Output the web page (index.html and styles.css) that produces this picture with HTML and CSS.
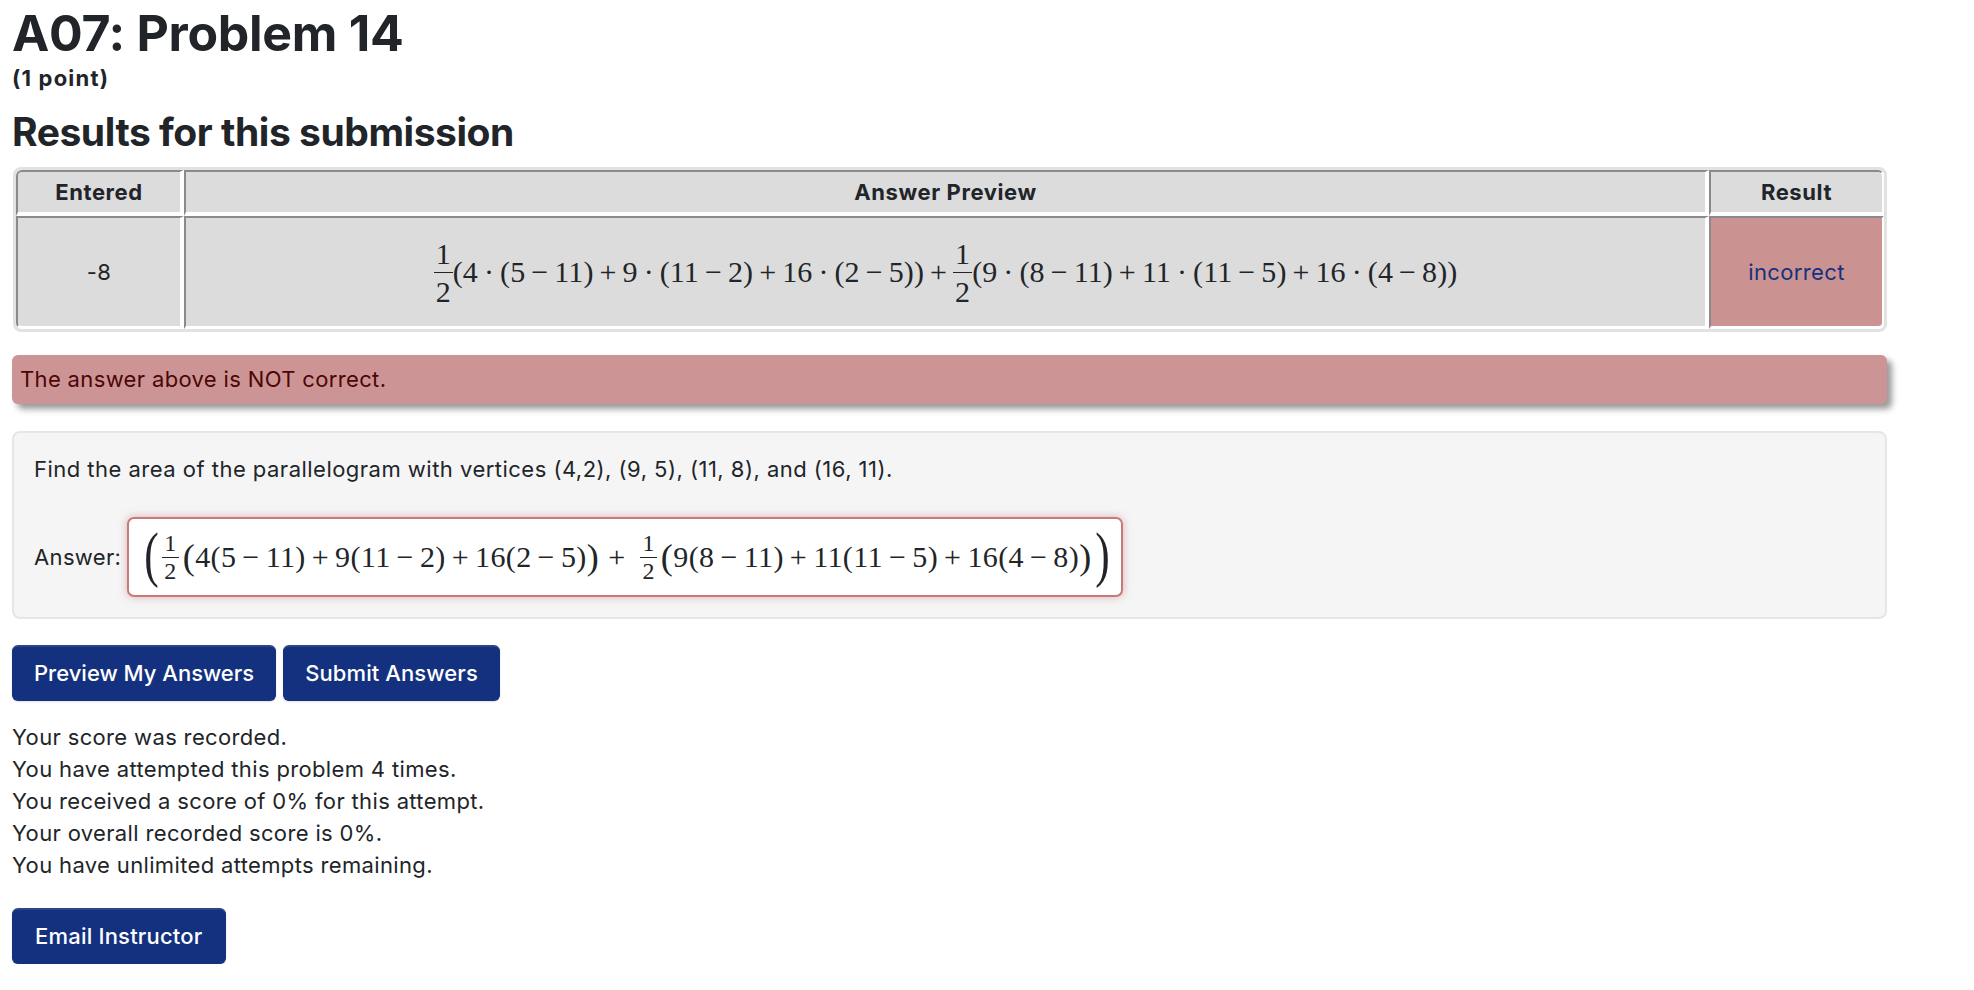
FILE: index.html
```html
<!DOCTYPE html>
<html lang="en">
<head>
<meta charset="utf-8">
<title>A07: Problem 14</title>
<link rel="stylesheet" href="styles.css">
</head>
<body>
<main class="page">
  <h1 class="title">A07: Problem 14</h1>
  <div class="points">(1 point)</div>
  <h2 class="results-title">Results for this submission</h2>
  <div class="results-wrap">
    <table class="results">
      <colgroup><col class="c-entered"><col class="c-preview"><col class="c-result"></colgroup>
      <thead>
        <tr><th class="tl">Entered</th><th>Answer Preview</th><th class="tr">Result</th></tr>
      </thead>
      <tbody>
        <tr>
          <td class="bl">-8</td>
          <td>
            <span class="math display">
              <span class="frac"><span class="num">1</span><span class="den">2</span></span><span>(4<i class="bin">·</i>(5<i class="bin">−</i>11)<i class="bin">+</i>9<i class="bin">·</i>(11<i class="bin">−</i>2)<i class="bin">+</i>16<i class="bin">·</i>(2<i class="bin">−</i>5))<i class="bin">+</i></span><span class="frac"><span class="num">1</span><span class="den">2</span></span><span>(9<i class="bin">·</i>(8<i class="bin">−</i>11)<i class="bin">+</i>11<i class="bin">·</i>(11<i class="bin">−</i>5)<i class="bin">+</i>16<i class="bin">·</i>(4<i class="bin">−</i>8))</span>
            </span>
          </td>
          <td class="incorrect br">incorrect</td>
        </tr>
      </tbody>
    </table>
  </div>

  <div class="alert">The answer above is NOT correct.</div>

  <section class="problem">
    <p class="question">Find the area of the parallelogram with vertices (4,2), (9, 5), (11, 8), and (16, 11).</p>
    <div class="answer-row">
      <span class="answer-label">Answer:</span>
      <div class="answer-box">
        <span class="math inline">
          <span class="paren-xl">(</span><span class="frac small"><span class="num">1</span><span class="den">2</span></span><span class="paren-md">(</span><span>4(5<i class="bin">−</i>11)<i class="bin">+</i>9(11<i class="bin">−</i>2)<i class="bin">+</i>16(2<i class="bin">−</i>5)</span><span class="paren-md">)</span><i class="bin">+</i><span class="frac small"><span class="num">1</span><span class="den">2</span></span><span class="paren-md">(</span><span>9(8<i class="bin">−</i>11)<i class="bin">+</i>11(11<i class="bin">−</i>5)<i class="bin">+</i>16(4<i class="bin">−</i>8)</span><span class="paren-md">)</span><span class="paren-xl">)</span>
        </span>
      </div>
    </div>
  </section>

  <div class="actions">
    <button class="btn btn-preview" type="button">Preview My Answers</button>
    <button class="btn" type="button">Submit Answers</button>
  </div>

  <div class="score">
    <div>Your score was recorded.</div>
    <div>You have attempted this problem 4 times.</div>
    <div>You received a score of 0% for this attempt.</div>
    <div>Your overall recorded score is 0%.</div>
    <div>You have unlimited attempts remaining.</div>
  </div>

  <button class="btn email" type="button">Email Instructor</button>
</main>
</body>
</html>
```

FILE: styles.css
```css
* { box-sizing: border-box; }
html, body { margin: 0; padding: 0; background: #fff; }
body {
  font-family: Inter, "Liberation Sans", sans-serif;
  font-size: 22px;
  line-height: 32px;
  letter-spacing: 0.35px;
  color: #212529;
}
.page { padding: 0 87px 0 12px; }
.title {
  margin: 0;
  padding-top: 3px;
  font-size: 50px;
  line-height: 60px;
  font-weight: 700;
  letter-spacing: -0.3px;
}
.points {
  height: 32px;
  margin-top: -1px;
  font-weight: 700;
  letter-spacing: 1.2px;
}
.results-title {
  margin: 15px 0 0;
  font-size: 39px;
  line-height: 46px;
  font-weight: 700;
  letter-spacing: -0.45px;
}
.results-wrap {
  margin-top: 12px;
  margin-left: 1px;
  border: 3px solid #e2e2e2;
  border-radius: 8px;
  background: #fff;
}
.results {
  width: 100%;
  table-layout: fixed;
  border-collapse: separate;
  border-spacing: 0;
}
.c-entered { width: 168px; }
.c-result { width: 175px; }
.results th, .results td {
  background: #dcdcdc;
  background-clip: padding-box;
  border-style: solid;
  border-color: #8a8a8a #fff #fff #8a8a8a;
  border-width: 2px 4px 4px 2px;
  padding: 0;
  text-align: center;
  vertical-align: middle;
}
.results th { height: 46px; font-weight: 700; letter-spacing: 0.6px; }
.results td { height: 113px; }
.results th:last-child, .results td:last-child { border-right-width: 2px; }
.results td { border-bottom-width: 3px; }
.tl { border-top-left-radius: 6px; }
.tr { border-top-right-radius: 6px; }
.bl { border-bottom-left-radius: 6px; }
.br { border-bottom-right-radius: 6px; }
.results td.incorrect { background: #cb9292; color: #14317f; }

.math {
  font-family: "Liberation Serif", "DejaVu Serif", serif;
  display: inline-flex;
  align-items: center;
  color: #212529;
  white-space: nowrap;
}
.math .bin { font-style: normal; margin: 0 0.2em; }
.math.display { font-size: 30px; line-height: 34px; letter-spacing: 0.1px; }
.frac {
  display: inline-flex;
  flex-direction: column;
  align-items: center;
}
.frac .num { border-bottom: 1.5px solid #212529; padding: 0 2px; line-height: 37px; }
.frac .den { line-height: 37px; }
.frac.small { font-size: 24px; margin: 0 4px 0 0; }
.frac.small .num { line-height: 27px; }
.frac.small .den { line-height: 27px; }
.math.inline .paren-md + .bin { margin-left: 9px; }
.math.inline .bin + .frac.small { margin-left: 9px; }

.alert {
  margin-top: 23px;
  height: 49px;
  width: 1875px;
  padding: 0 8px;
  line-height: 49px;
  border-radius: 6px;
  background: #cc9494;
  color: #4d0606;
  box-shadow: 5px 5px 6px #999;
}
.problem {
  margin-top: 27px;
  width: 1875px;
  height: 188px;
  padding: 20px 20px 0;
  background: #f5f5f5;
  border: 2px solid #e6e6e6;
  border-radius: 8px;
}
.question { margin: 0; letter-spacing: 0.48px; }
.answer-row {
  display: flex;
  align-items: center;
  gap: 6px;
  margin-top: 32px;
}
.answer-box {
  display: flex;
  align-items: center;
  width: 996px;
  height: 80px;
  padding-left: 12px;
  background: #fff;
  border: 2px solid #c77a7a;
  border-radius: 7px;
  box-shadow: 0 0 9px rgba(199, 122, 122, 0.55);
}
.math.inline { font-size: 30px; line-height: 34px; letter-spacing: 0.4px; }
.paren-xl { font-size: 62px; line-height: 60px; font-weight: 400; transform: scaleX(0.7); margin-top: -6px; }
.paren-md { font-size: 36px; line-height: 40px; }

.actions {
  display: flex;
  gap: 7px;
  margin-top: 26px;
}
.btn {
  height: 56px;
  padding: 0 21px 2px;
  font: inherit;
  font-weight: 500;
  letter-spacing: 0.1px;
  color: #fff;
  background: #14317f;
  border: 1px solid #14317f;
  border-top: 2px solid #2c4589;
  border-radius: 6px;
  box-shadow: 0 1px 2px rgba(0, 0, 0, 0.12);
}
.btn-preview { letter-spacing: 0; }
.score { margin-top: 20px; }
.email { display: block; margin-top: 27px; padding: 0 22px 2px; letter-spacing: 0.2px; }
```
